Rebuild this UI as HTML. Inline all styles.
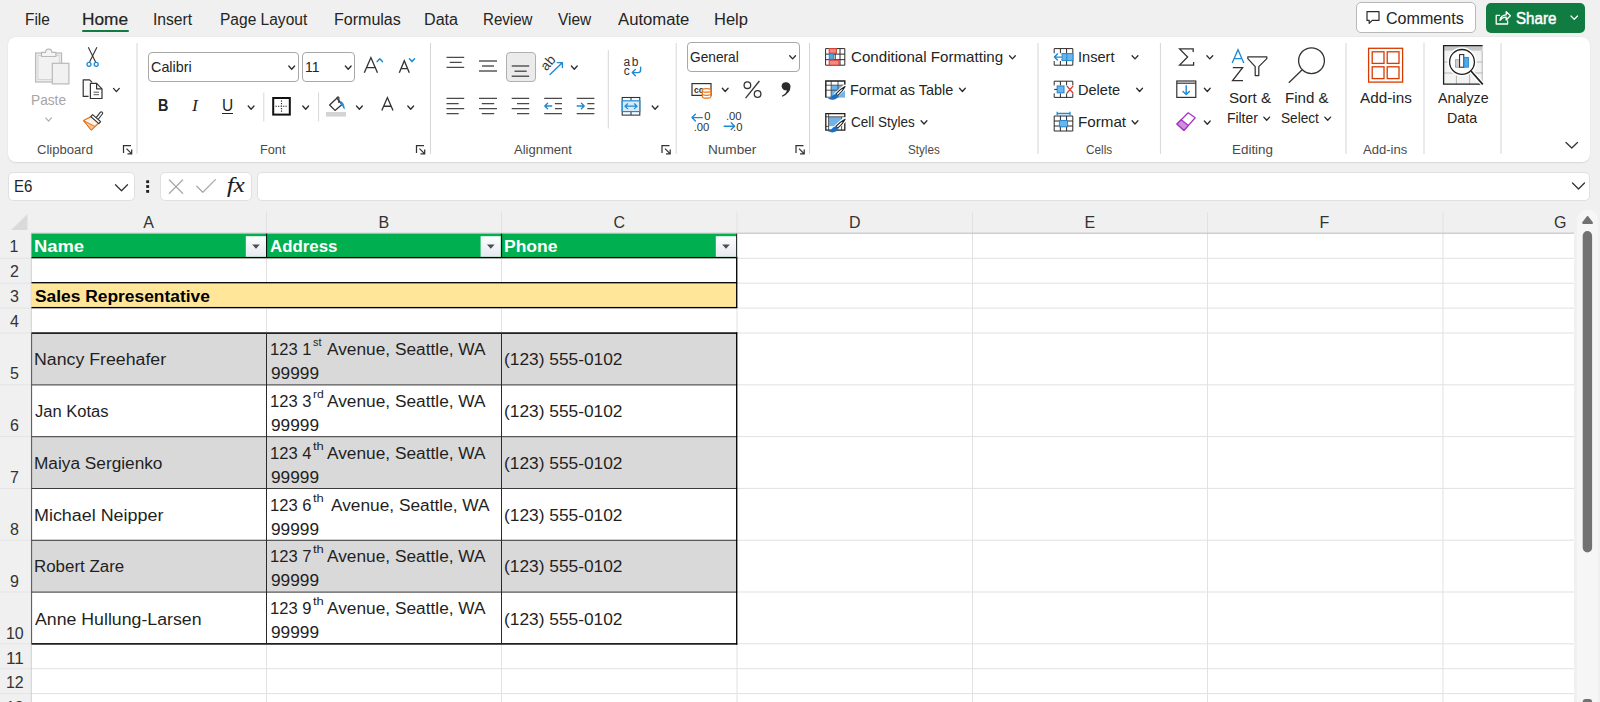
<!DOCTYPE html>
<html lang="en"><head><meta charset="utf-8"><title>Excel</title>
<style>
html,body{margin:0;padding:0}
body{width:1600px;height:702px;overflow:hidden;position:relative;background:#f0f0f0;font-family:"Liberation Sans", sans-serif;color:#242424}
body>div,body>span,body>svg{position:absolute}
.t{white-space:pre;line-height:1;display:block}
</style></head><body>
<div style="left:82px;top:30px;width:47px;height:2.4px;background:#107c41;border-radius:1px"></div>
<div style="left:1355.5px;top:2px;width:120.5px;height:30.5px;background:#fff;border:1px solid #b8b8b8;box-sizing:border-box;border-radius:5px;"></div>
<div style="left:1486px;top:2.5px;width:99px;height:30.0px;background:#107c41;border-radius:5px;"></div>
<div style="left:8px;top:37px;width:1582px;height:125px;background:#fff;border-radius:8px;box-shadow:0 0.5px 1.5px rgba(0,0,0,.10)"></div>
<div style="left:147.5px;top:52px;width:151.5px;height:30px;background:#fff;border:1px solid #a8a8a8;box-sizing:border-box;border-radius:4px;"></div>
<div style="left:302px;top:52px;width:53px;height:30px;background:#fff;border:1px solid #a8a8a8;box-sizing:border-box;border-radius:4px;"></div>
<div style="left:686.5px;top:42px;width:113.5px;height:30px;background:#fff;border:1px solid #a8a8a8;box-sizing:border-box;border-radius:4px;"></div>
<div style="left:505.5px;top:52px;width:30.5px;height:30px;background:#ebebeb;border:1px solid #b0b0b0;box-sizing:border-box;border-radius:4px;"></div>
<div style="left:221.5px;top:112.6px;width:11.5px;height:1.4px;background:#242424"></div>
<div style="left:8px;top:172px;width:126.5px;height:28.6px;background:#fff;border:1px solid #e0e0e0;box-sizing:border-box;border-radius:5px"></div>
<div style="left:160px;top:172px;width:91.6px;height:28.6px;background:#fff;border:1px solid #e0e0e0;box-sizing:border-box;border-radius:5px"></div>
<div style="left:257px;top:172px;width:1332.5px;height:28.6px;background:#fff;border:1px solid #e0e0e0;box-sizing:border-box;border-radius:5px"></div>
<div style="left:31px;top:233px;width:1543px;height:469px;background:#fff;"></div>
<svg width="1600" height="702" viewBox="0 0 1600 702" style="left:0;top:0">
<rect x="136.5" y="43" width="1" height="111" fill="#d6d6d6"/>
<rect x="430.0" y="43" width="1" height="111" fill="#d6d6d6"/>
<rect x="675.7" y="43" width="1" height="111" fill="#d6d6d6"/>
<rect x="809.0" y="43" width="1" height="111" fill="#d6d6d6"/>
<rect x="1037.5" y="43" width="1" height="111" fill="#d6d6d6"/>
<rect x="1159.9" y="43" width="1" height="111" fill="#d6d6d6"/>
<rect x="1345.5" y="43" width="1" height="111" fill="#d6d6d6"/>
<rect x="1423.5" y="43" width="1" height="111" fill="#d6d6d6"/>
<rect x="1500.5" y="43" width="1" height="111" fill="#d6d6d6"/>
<rect x="263.3" y="92.5" width="1" height="28.900000000000006" fill="#d6d6d6"/>
<rect x="318.1" y="92.5" width="1" height="28.900000000000006" fill="#d6d6d6"/>
<rect x="607.8" y="50.2" width="1" height="78.3" fill="#d6d6d6"/>
<g fill="none" stroke="#333" stroke-width="1.25"><path d="M123.5 153.1 v-7.5 h7.5"/><path d="M126.5 148.6 l5 5 M131.7 149.6 v4.2 h-4.2"/></g>
<g fill="none" stroke="#333" stroke-width="1.25"><path d="M416.5 153.1 v-7.5 h7.5"/><path d="M419.5 148.6 l5 5 M424.7 149.6 v4.2 h-4.2"/></g>
<g fill="none" stroke="#333" stroke-width="1.25"><path d="M662.0 153.1 v-7.5 h7.5"/><path d="M665.0 148.6 l5 5 M670.2 149.6 v4.2 h-4.2"/></g>
<g fill="none" stroke="#333" stroke-width="1.25"><path d="M796.0 153.1 v-7.5 h7.5"/><path d="M799.0 148.6 l5 5 M804.2 149.6 v4.2 h-4.2"/></g>
<path d="M45.7 117.9 l2.9 3.2 l2.9 -3.2" fill="none" stroke="#b0b0b0" stroke-width="1.3" stroke-linecap="round" stroke-linejoin="round"/>
<path d="M113.5 88.4 l2.9 3.2 l2.9 -3.2" fill="none" stroke="#2b2b2b" stroke-width="1.3" stroke-linecap="round" stroke-linejoin="round"/>
<path d="M288.8 66.0 l2.9 3.2 l2.9 -3.2" fill="none" stroke="#2b2b2b" stroke-width="1.3" stroke-linecap="round" stroke-linejoin="round"/>
<path d="M345.3 66.0 l2.9 3.2 l2.9 -3.2" fill="none" stroke="#2b2b2b" stroke-width="1.3" stroke-linecap="round" stroke-linejoin="round"/>
<path d="M248.2 106.0 l2.9 3.2 l2.9 -3.2" fill="none" stroke="#2b2b2b" stroke-width="1.3" stroke-linecap="round" stroke-linejoin="round"/>
<path d="M302.8 106.0 l2.9 3.2 l2.9 -3.2" fill="none" stroke="#2b2b2b" stroke-width="1.3" stroke-linecap="round" stroke-linejoin="round"/>
<path d="M356.5 106.0 l2.9 3.2 l2.9 -3.2" fill="none" stroke="#2b2b2b" stroke-width="1.3" stroke-linecap="round" stroke-linejoin="round"/>
<path d="M407.8 106.0 l2.9 3.2 l2.9 -3.2" fill="none" stroke="#2b2b2b" stroke-width="1.3" stroke-linecap="round" stroke-linejoin="round"/>
<path d="M571.4 66.0 l2.9 3.2 l2.9 -3.2" fill="none" stroke="#2b2b2b" stroke-width="1.3" stroke-linecap="round" stroke-linejoin="round"/>
<path d="M652.2 106.0 l2.9 3.2 l2.9 -3.2" fill="none" stroke="#2b2b2b" stroke-width="1.3" stroke-linecap="round" stroke-linejoin="round"/>
<path d="M789.7 55.699999999999996 l2.9 3.2 l2.9 -3.2" fill="none" stroke="#2b2b2b" stroke-width="1.3" stroke-linecap="round" stroke-linejoin="round"/>
<path d="M722.3 88.30000000000001 l2.9 3.2 l2.9 -3.2" fill="none" stroke="#2b2b2b" stroke-width="1.3" stroke-linecap="round" stroke-linejoin="round"/>
<path d="M1009.5 55.699999999999996 l2.9 3.2 l2.9 -3.2" fill="none" stroke="#2b2b2b" stroke-width="1.3" stroke-linecap="round" stroke-linejoin="round"/>
<path d="M959.5 88.30000000000001 l2.9 3.2 l2.9 -3.2" fill="none" stroke="#2b2b2b" stroke-width="1.3" stroke-linecap="round" stroke-linejoin="round"/>
<path d="M921.1 120.80000000000001 l2.9 3.2 l2.9 -3.2" fill="none" stroke="#2b2b2b" stroke-width="1.3" stroke-linecap="round" stroke-linejoin="round"/>
<path d="M1132.1 55.699999999999996 l2.9 3.2 l2.9 -3.2" fill="none" stroke="#2b2b2b" stroke-width="1.3" stroke-linecap="round" stroke-linejoin="round"/>
<path d="M1136.7 88.30000000000001 l2.9 3.2 l2.9 -3.2" fill="none" stroke="#2b2b2b" stroke-width="1.3" stroke-linecap="round" stroke-linejoin="round"/>
<path d="M1132.1 120.80000000000001 l2.9 3.2 l2.9 -3.2" fill="none" stroke="#2b2b2b" stroke-width="1.3" stroke-linecap="round" stroke-linejoin="round"/>
<path d="M1206.9 55.699999999999996 l2.9 3.2 l2.9 -3.2" fill="none" stroke="#2b2b2b" stroke-width="1.3" stroke-linecap="round" stroke-linejoin="round"/>
<path d="M1204.4 88.30000000000001 l2.9 3.2 l2.9 -3.2" fill="none" stroke="#2b2b2b" stroke-width="1.3" stroke-linecap="round" stroke-linejoin="round"/>
<path d="M1204.4 121.0 l2.9 3.2 l2.9 -3.2" fill="none" stroke="#2b2b2b" stroke-width="1.3" stroke-linecap="round" stroke-linejoin="round"/>
<path d="M1263.8 117.10000000000001 l2.9 3.2 l2.9 -3.2" fill="none" stroke="#2b2b2b" stroke-width="1.3" stroke-linecap="round" stroke-linejoin="round"/>
<path d="M1324.8 117.10000000000001 l2.9 3.2 l2.9 -3.2" fill="none" stroke="#2b2b2b" stroke-width="1.3" stroke-linecap="round" stroke-linejoin="round"/>
<path d="M1571 16 l3.25 3.4 l3.25 -3.4" fill="none" stroke="#fff" stroke-width="1.25" stroke-linecap="round" stroke-linejoin="round"/>
<path d="M1566 142.5 l5.75 5.5 l5.75 -5.5" fill="none" stroke="#333" stroke-width="1.3" stroke-linecap="round" stroke-linejoin="round"/>
<path d="M1572.5 183 l6.0 6 l6.0 -6" fill="none" stroke="#333" stroke-width="1.3" stroke-linecap="round" stroke-linejoin="round"/>
<path d="M115.5 184.8 l6.0 6 l6.0 -6" fill="none" stroke="#333" stroke-width="1.3" stroke-linecap="round" stroke-linejoin="round"/>
<g fill="#ececec" stroke="#b9b9b9" stroke-width="1.2"><rect x="35.6" y="53" width="26" height="29" /><rect x="38" y="55.4" width="21.2" height="24.2" fill="#f2f2f2" stroke="#cfcfcf" stroke-width="0.8"/><path d="M41.5 56.5 v-4.2 h4 a3.2 3.2 0 0 1 6.4 0 h4 v4.2 z" fill="#f4f4f4"/><rect x="52.3" y="63.3" width="16.6" height="20.6" fill="#f1f1f1"/></g>
<g fill="none" stroke-width="1.1"><path d="M88.3 47.2 L95.6 62 M96.9 47.2 L89.6 62" stroke="#333"/><circle cx="89" cy="64.3" r="2" stroke="#1e8ad6" stroke-width="1.3"/><circle cx="96.2" cy="64.3" r="2" stroke="#1e8ad6" stroke-width="1.3"/></g>
<g fill="none" stroke="#333" stroke-width="1.2" stroke-linejoin="round"><path d="M91.6 82.6 V81.8 L89.6 79.8 H83.2 V96.4 H88.6" fill="#fafafa"/><path d="M90.4 83.4 H96.6 L102 88.8 V98.5 H90.4 Z" fill="#fff"/><path d="M96.6 83.6 V88.8 H101.8"/><path d="M93.6 92.2 H99 M93.6 94.7 H99" stroke-width="1" stroke="#555"/></g>
<g stroke-linejoin="round" stroke-linecap="round"><path d="M91.6 116.4 L83.5 120.5 L91.4 129.8 L98.8 123 Z" fill="#fdf3ea" stroke="#e8731a" stroke-width="1.3"/><path d="M84 120.8 L95 126.5 L91.4 129.8 Z" fill="#f9c48f" stroke="#e8731a" stroke-width="1"/><path d="M97.4 118.2 L101.3 113.2" stroke="#333" stroke-width="3.8" fill="none"/><path d="M97.4 118.2 L101.3 113.2" stroke="#fff" stroke-width="1.5" fill="none"/><path d="M92.6 114.6 L100.6 121.6 L98.8 123.6 L90.8 116.6 Z" fill="#fff" stroke="#333" stroke-width="1.15"/></g>
<g fill="none" stroke="#333" stroke-width="1.35"><path d="M364.3 72.7 L370.9 57.6 L377.5 72.7 M366.4 67.6 H375.4"/><path d="M399.3 72.7 L404.3 60.8 L409.3 72.7 M400.9 68.6 H407.7"/></g>
<g fill="none" stroke="#1e8ad6" stroke-width="1.5" stroke-linecap="round" stroke-linejoin="round"><path d="M377.2 61.6 L379.8 58.7 L382.4 61.6"/><path d="M409.4 58.7 L412 61.6 L414.6 58.7"/></g>
<rect x="273.2" y="98" width="16.6" height="16.6" fill="#fff" stroke="#111" stroke-width="2"/><path d="M281.5 100.5 V112.5 M275.5 106.3 H287.5" stroke="#2b2b2b" stroke-width="1.1" stroke-dasharray="1.3 1.2" fill="none"/>
<g fill="none" stroke="#333" stroke-width="1.25" stroke-linejoin="round"><path d="M329.6 105 L336.8 98.2 L342 104.6 L335 110.4 Z" fill="#fff"/><path d="M336.8 98.2 q0.6 -2 2.1 -0.8 V103"/></g><path d="M340.3 101.3 q3.6 1 4 7.5 q-1.6 -3.6 -3.4 -4.6 z" fill="#1e8ad6" stroke="#1e8ad6" stroke-width="0.8"/><rect x="326" y="112" width="20" height="4.6" fill="#d4d4d4"/>
<path d="M381.8 110.4 L387.4 97.6 L393 110.4 M383.7 106.2 H391.1" fill="none" stroke="#333" stroke-width="1.35"/>
<path d="M446.5 57.3 H464.2 M449.7 62.4 H461.7 M446.5 67.3 H464.2" stroke="#4a4a4a" stroke-width="1.25" fill="none"/>
<path d="M479 60.9 H497 M482 66 H494 M479 71.1 H497" stroke="#5a5a5a" stroke-width="1.5" fill="none"/>
<path d="M511.7 66 H529.2 M514.5 71.2 H526.7 M511.7 76.2 H529.2" stroke="#5a5a5a" stroke-width="1.5" fill="none"/>
<path d="M446.5 98.3 H464.2 M446.5 103.5 H458.7 M446.5 108.6 H464.2 M446.5 113.7 H458.7" stroke="#4a4a4a" stroke-width="1.25" fill="none"/>
<path d="M479 98.3 H497 M481.8 103.5 H494.2 M479 108.6 H497 M481.8 113.7 H494.2" stroke="#4a4a4a" stroke-width="1.25" fill="none"/>
<path d="M511.7 98.3 H529.2 M517 103.5 H529.2 M511.7 108.6 H529.2 M517 113.7 H529.2" stroke="#4a4a4a" stroke-width="1.25" fill="none"/>
<path d="M544.2 98.3 H562 M554.9 103.5 H562 M554.9 108.6 H562 M544.2 113.7 H562" stroke="#4a4a4a" stroke-width="1.25" fill="none"/>
<path d="M576.7 98.3 H594.4 M587.3 103.5 H594.4 M587.3 108.6 H594.4 M576.7 113.7 H594.4" stroke="#4a4a4a" stroke-width="1.25" fill="none"/>
<g fill="none" stroke="#1e8ad6" stroke-width="1.4" stroke-linecap="round" stroke-linejoin="round"><path d="M551.7 106 H544.8 M547.6 103.2 L544.8 106 L547.6 108.8"/><path d="M577.2 106 H584.2 M581.4 103.2 L584.2 106 L581.4 108.8"/></g>
<text x="0" y="0" transform="translate(546.6 71.4) rotate(-50)" font-family='"Liberation Sans", sans-serif' font-size="13.5" fill="#333">ab</text>
<g fill="none" stroke="#1e8ad6" stroke-width="1.4" stroke-linecap="round" stroke-linejoin="round"><path d="M550 74.6 L562.2 62.8 M557.4 62.6 H562.4 V67.6"/></g>
<text x="623.6" y="66.4" font-family='"Liberation Sans", sans-serif' font-size="12" fill="#333" letter-spacing="1.5">ab</text><text x="623.8" y="75.3" font-family='"Liberation Sans", sans-serif' font-size="12" fill="#333">c</text>
<path d="M640.6 67.2 V70 q0 2.6 -2.6 2.6 H632.2 M635.3 69.6 L632.2 72.6 L635.3 75.8" fill="none" stroke="#1e8ad6" stroke-width="1.4" stroke-linecap="round" stroke-linejoin="round"/>
<g fill="none" stroke="#333" stroke-width="1.1"><rect x="622.2" y="97.5" width="17.6" height="17.6"/><path d="M631 97.5 V100.6 M631 111.8 V115.1"/></g><rect x="622.2" y="100.8" width="17.6" height="10.8" fill="#d6eaf8" stroke="#1e8ad6" stroke-width="1.2"/><path d="M625 106.2 H637 M627.6 103.8 L625 106.2 L627.6 108.6 M634.4 103.8 L637 106.2 L634.4 108.6" fill="none" stroke="#1e8ad6" stroke-width="1.2" stroke-linecap="round" stroke-linejoin="round"/>
<g fill="none" stroke="#333" stroke-width="1.2"><rect x="692" y="83.6" width="19" height="11.8"/></g><text x="694" y="93" font-family='"Liberation Sans", sans-serif' font-size="8.5" font-weight="700" fill="#333">cc</text><g fill="#fff" stroke="#e8731a" stroke-width="1.2"><path d="M702.3 90.4 v6 a4.3 1.8 0 0 0 8.6 0 v-6"/><ellipse cx="706.6" cy="90.4" rx="4.3" ry="1.8"/><path d="M702.3 93.6 a4.3 1.8 0 0 0 8.6 0" fill="none"/></g>
<g fill="none" stroke="#333" stroke-width="1.3"><circle cx="747.4" cy="85.2" r="3.3"/><circle cx="757.6" cy="94" r="3.3"/><path d="M759.4 81 L745.6 98.2"/></g>
<path d="M786 82.2 a4.3 4.3 0 0 1 4.5 4.6 q0 6 -8 10 l-0.6 -1 q4.6 -2.6 4.9 -5.6 a4.2 4.2 0 0 1 -5.2 -3.9 a4.3 4.3 0 0 1 4.4 -4.1 z" fill="#2b2b2b"/>
<text x="704.2" y="120" font-family='"Liberation Sans", sans-serif' font-size="11.3" fill="#333">0</text><text x="693.8" y="130.6" font-family='"Liberation Sans", sans-serif' font-size="11.3" fill="#333" letter-spacing="-0.1">.00</text><text x="726" y="120" font-family='"Liberation Sans", sans-serif' font-size="11.3" fill="#333" letter-spacing="-0.1">.00</text><text x="733" y="130.6" font-family='"Liberation Sans", sans-serif' font-size="11.3" fill="#333">.0</text>
<g fill="none" stroke="#1e8ad6" stroke-width="1.4" stroke-linecap="round" stroke-linejoin="round"><path d="M702.4 117.6 H692 M695.4 114.2 L692 117.6 L695.4 121"/><path d="M724.2 126.2 H734.6 M731.2 122.8 L734.6 126.2 L731.2 129.6"/></g>
<path d="M825.6 48.6 H844.8 V65.2 H825.6 Z M830.40 48.6 V65.2 M835.20 48.6 V65.2 M840.00 48.6 V65.2 M825.6 54.13 H844.8 M825.6 59.67 H844.8" fill="#fff" stroke="#2b2b2b" stroke-width="1.0"/>
<rect x="829.2" y="48.6" width="7.2" height="4.6" fill="#f08a84" stroke="#d8423a" stroke-width="1.1"/><rect x="829.2" y="54" width="4.2" height="5.2" fill="#5aa6e0" stroke="#1e8ad6" stroke-width="1"/><rect x="829.2" y="60.2" width="9.8" height="5" fill="#f08a84" stroke="#d8423a" stroke-width="1.1"/>
<rect x="825.6" y="81" width="19.2" height="16.4" fill="#fff"/><rect x="831.4" y="85.4" width="13.6" height="12.2" fill="#6fb3e8"/><path d="M831.2 81 V97.4 M838 81 V97.4 M825.6 85.2 H844.8 M825.6 90.2 H844.8 M825.6 97.2 H831" stroke="#444" stroke-width="0.9" fill="none"/><path d="M825.8 97.4 V81 H844.8 V85" stroke="#1f1f1f" stroke-width="1.4" fill="none"/>
<path d="M844.8 87.1 L835.3 95.5" stroke="#fff" stroke-width="5" fill="none" stroke-linecap="round"/><path d="M845.1 86.6 Q840.5 89.0 835.9 93.8 L837.7 95.6 Q842.7 91.4 845.1 86.6 Z" fill="#fff" stroke="#222" stroke-width="1.1" stroke-linejoin="round"/><path d="M836.3 94.2 q-3.2 -0.2 -4.2 2 q-0.8 1.8 -3.8 2.2 q3.4 1.9 6.9 0.6 q2.6 -1.2 2.9 -3.1 z" fill="#1b6ec2" stroke="#1b6ec2" stroke-width="0.5"/>
<rect x="825.8" y="113.6" width="19" height="16.6" fill="#fff"/><rect x="829" y="117" width="12.4" height="9.2" fill="#6fb3e8"/><path d="M828.6 113.6 V130.2 M841.6 117 V130.2 M825.8 116.8 H844.8 M825.8 126.4 H829" stroke="#444" stroke-width="0.9" fill="none"/><path d="M825.8 113.6 H844.8 V130.2 H825.8 Z" stroke="#1f1f1f" stroke-width="1.3" fill="none"/>
<path d="M844.8 119.7 L835.3 128.1" stroke="#fff" stroke-width="5" fill="none" stroke-linecap="round"/><path d="M845.1 119.2 Q840.5 121.6 835.9 126.4 L837.7 128.2 Q842.7 124.0 845.1 119.2 Z" fill="#fff" stroke="#222" stroke-width="1.1" stroke-linejoin="round"/><path d="M836.3 126.8 q-3.2 -0.2 -4.2 2 q-0.8 1.8 -3.8 2.2 q3.4 1.9 6.9 0.6 q2.6 -1.2 2.9 -3.1 z" fill="#1b6ec2" stroke="#1b6ec2" stroke-width="0.5"/>
<path d="M1054.2 48.6 H1072.8 V65.2 H1054.2 Z M1060.40 48.6 V65.2 M1066.60 48.6 V65.2 M1054.2 54.13 H1072.8 M1054.2 59.67 H1072.8" fill="#fff" stroke="#2b2b2b" stroke-width="1.0"/>
<rect x="1062" y="53.6" width="11" height="7" fill="#6fb3e8" stroke="#1e8ad6" stroke-width="1"/><path d="M1066.8 53.6 V60.6" stroke="#1e8ad6" stroke-width="1"/><rect x="1053" y="53.2" width="8.4" height="7.8" fill="#fff"/><path d="M1061.6 57.1 H1054.4 M1057.4 54.1 L1054.4 57.1 L1057.4 60.1" fill="none" stroke="#1e8ad6" stroke-width="1.4" stroke-linecap="round" stroke-linejoin="round"/>
<path d="M1054.2 81.2 H1072.8 V97.4 H1054.2 Z M1060.40 81.2 V97.4 M1066.60 81.2 V97.4 M1054.2 86.60 H1072.8 M1054.2 92.00 H1072.8" fill="#fff" stroke="#2b2b2b" stroke-width="1.0"/>
<rect x="1053" y="85.4" width="21" height="8" fill="#fff"/><rect x="1057.2" y="86" width="6.8" height="6.8" fill="#6fb3e8" stroke="#1e8ad6" stroke-width="1.1"/><path d="M1054.2 89.4 H1057 " stroke="#2b2b2b" stroke-width="1"/><path d="M1067.2 86.4 L1072.8 92.8 M1072.8 86.4 L1067.2 92.8" stroke="#d8423a" stroke-width="1.4" fill="none" stroke-linecap="round"/>
<path d="M1054.2 116 H1072.8 V131 H1054.2 Z M1060.40 116 V131 M1066.60 116 V131 M1054.2 121.00 H1072.8 M1054.2 126.00 H1072.8" fill="#fff" stroke="#2b2b2b" stroke-width="1.0"/>
<rect x="1059.4" y="120.6" width="8.2" height="6.2" fill="#6fb3e8" stroke="#1e8ad6" stroke-width="1"/><path d="M1057.2 113.5 H1070 M1057.2 111.8 V115.2 M1070 111.8 V115.2" stroke="#1e8ad6" stroke-width="1.3" fill="none"/>
<path d="M1193.2 52 V48.9 H1179.6 L1187.6 57 L1179.6 65.1 H1193.6 V62" fill="none" stroke="#333" stroke-width="1.3" stroke-linejoin="miter"/>
<g fill="none" stroke="#333" stroke-width="1.2"><rect x="1176.8" y="81" width="19" height="16.4" fill="#fff"/><path d="M1176.8 83.2 H1195.8"/></g><path d="M1186.2 85.8 V94.4 M1183 91.4 L1186.2 94.6 L1189.4 91.4" fill="none" stroke="#1e8ad6" stroke-width="1.4" stroke-linecap="round" stroke-linejoin="round"/>
<g stroke="#a435c0" stroke-width="1.3" stroke-linejoin="round"><path d="M1177 124 L1188.2 112.8 L1195.2 117.8 L1184 130.4 Z" fill="#fff"/><path d="M1177 124 L1181.2 119.8 L1188.4 125.4 L1184 130.4 Z" fill="#cf8fdc"/></g>
<path d="M1232.2 63 L1238 49.8 L1243.8 63 M1234.2 58.6 H1241.8" fill="none" stroke="#1e8ad6" stroke-width="1.35"/><path d="M1232.8 67.6 H1242.6 L1232.6 80.6 H1243" fill="none" stroke="#333" stroke-width="1.35"/><path d="M1247.8 56.8 H1266.8 V58.6 L1258.8 66.6 V75.6 H1255.2 V66.6 L1247.8 58.6 Z" fill="#fff" stroke="#333" stroke-width="1.25" stroke-linejoin="round"/>
<g fill="none" stroke="#333" stroke-width="1.3"><circle cx="1311.5" cy="60.7" r="12.9"/><path d="M1302.2 69.8 L1288.8 82.8"/></g>
<g fill="none" stroke="#d83b01" stroke-width="1.3"><rect x="1368.6" y="48.3" width="34" height="33.8"/><rect x="1372.2" y="51.8" width="11.8" height="11.6"/><rect x="1387.2" y="51.8" width="11.8" height="11.6"/><rect x="1372.2" y="66.8" width="11.8" height="11.8"/><rect x="1387.2" y="66.8" width="11.8" height="11.8"/></g>
<rect x="1443.6" y="45.6" width="39" height="38.6" fill="#f3f3f3"/><rect x="1443.6" y="45.6" width="39" height="5" fill="#c6c6c6"/><path d="M1443.6 62 H1482.6 M1443.6 73 H1482.6 M1456.4 51 V84 M1469.6 51 V84 M1482.2 51 V84" stroke="#b5b5b5" stroke-width="1" fill="none"/><path d="M1482.6 45.6 H1443.6 V84.2 H1482.6" stroke="#1f1f1f" stroke-width="1.3" fill="none"/><circle cx="1462" cy="61.9" r="14.6" fill="#fff"/><path d="M1471 71 L1482.8 84.4" stroke="#fff" stroke-width="4" fill="none"/><path d="M1471 71 L1482.8 84.4" stroke="#1f1f1f" stroke-width="1.6" fill="none"/><circle cx="1462" cy="61.9" r="12.4" fill="#fff" stroke="#1f1f1f" stroke-width="1.3"/><rect x="1455.4" y="59.8" width="4" height="7.4" fill="#d0d0d0" stroke="#9a9a9a" stroke-width="0.8"/><rect x="1459.6" y="54.6" width="4.2" height="12.6" fill="#fff" stroke="#1f1f1f" stroke-width="1"/><rect x="1464" y="57.4" width="4.4" height="9.8" fill="#5aa6e0" stroke="#1e8ad6" stroke-width="0.9"/>
<path d="M1367 11.6 H1379 V20.4 H1372.2 L1369.2 23.4 V20.4 H1367 Z" fill="none" stroke="#2b2b2b" stroke-width="1.2" stroke-linejoin="round"/>
<g fill="none" stroke="#fff" stroke-width="1.3" stroke-linejoin="round" stroke-linecap="round"><path d="M1499.6 15.4 H1496.2 V24 H1507.6 V21"/><path d="M1500 20.4 q0.6 -5.4 6.2 -5.6 V11.6 L1510.4 15.8 L1506.2 20 V17.2 q-4 -0.2 -6.2 3.2 z"/></g>
<g fill="#1f1f1f"><rect x="146.2" y="180.3" width="2.9" height="2.8"/><rect x="146.2" y="185.1" width="2.9" height="2.8"/><rect x="146.2" y="190" width="2.9" height="2.8"/></g>
<g fill="none" stroke="#a9a9a9" stroke-width="1.3" stroke-linecap="round" stroke-linejoin="round"><path d="M169.4 180 L182.6 193.2 M182.6 180 L169.4 193.2"/><path d="M196.8 186.2 L202.8 192.2 L215.4 179.6"/></g>
<rect x="266.0" y="233" width="1" height="469" fill="#e2e2e2"/>
<rect x="266.0" y="212" width="1" height="21" fill="#e2e2e2"/>
<rect x="501.0" y="233" width="1" height="469" fill="#e2e2e2"/>
<rect x="501.0" y="212" width="1" height="21" fill="#e2e2e2"/>
<rect x="736.5" y="233" width="1" height="469" fill="#e2e2e2"/>
<rect x="736.5" y="212" width="1" height="21" fill="#e2e2e2"/>
<rect x="972.0" y="233" width="1" height="469" fill="#e2e2e2"/>
<rect x="972.0" y="212" width="1" height="21" fill="#e2e2e2"/>
<rect x="1207.0" y="233" width="1" height="469" fill="#e2e2e2"/>
<rect x="1207.0" y="212" width="1" height="21" fill="#e2e2e2"/>
<rect x="1442.5" y="233" width="1" height="469" fill="#e2e2e2"/>
<rect x="1442.5" y="212" width="1" height="21" fill="#e2e2e2"/>
<rect x="31" y="257.8" width="1543" height="1" fill="#e2e2e2"/>
<rect x="0" y="257.8" width="31" height="1" fill="#e4e4e4"/>
<rect x="31" y="282.7" width="1543" height="1" fill="#e2e2e2"/>
<rect x="0" y="282.7" width="31" height="1" fill="#e4e4e4"/>
<rect x="31" y="307.6" width="1543" height="1" fill="#e2e2e2"/>
<rect x="0" y="307.6" width="31" height="1" fill="#e4e4e4"/>
<rect x="31" y="332.5" width="1543" height="1" fill="#e2e2e2"/>
<rect x="0" y="332.5" width="31" height="1" fill="#e4e4e4"/>
<rect x="31" y="384.3" width="1543" height="1" fill="#e2e2e2"/>
<rect x="0" y="384.3" width="31" height="1" fill="#e4e4e4"/>
<rect x="31" y="436.1" width="1543" height="1" fill="#e2e2e2"/>
<rect x="0" y="436.1" width="31" height="1" fill="#e4e4e4"/>
<rect x="31" y="487.9" width="1543" height="1" fill="#e2e2e2"/>
<rect x="0" y="487.9" width="31" height="1" fill="#e4e4e4"/>
<rect x="31" y="539.7" width="1543" height="1" fill="#e2e2e2"/>
<rect x="0" y="539.7" width="31" height="1" fill="#e4e4e4"/>
<rect x="31" y="591.5" width="1543" height="1" fill="#e2e2e2"/>
<rect x="0" y="591.5" width="31" height="1" fill="#e4e4e4"/>
<rect x="31" y="643.3" width="1543" height="1" fill="#e2e2e2"/>
<rect x="0" y="643.3" width="31" height="1" fill="#e4e4e4"/>
<rect x="31" y="668.2" width="1543" height="1" fill="#e2e2e2"/>
<rect x="0" y="668.2" width="31" height="1" fill="#e4e4e4"/>
<rect x="31" y="693.1" width="1543" height="1" fill="#e2e2e2"/>
<rect x="0" y="693.1" width="31" height="1" fill="#e4e4e4"/>
<rect x="31" y="718.0" width="1543" height="1" fill="#e2e2e2"/>
<rect x="0" y="718.0" width="31" height="1" fill="#e4e4e4"/>
<rect x="31" y="232.7" width="1543" height="1" fill="#bdbdbd"/>
<rect x="30.8" y="233" width="1" height="469" fill="#cfcfcf"/>
<path d="M27.5 214 V230 H11 Z" fill="#dadada"/>
<rect x="31.5" y="233.7" width="705.0" height="23.600000000000023" fill="#00b050"/>
<rect x="31.5" y="283.0" width="705.0" height="24.30000000000001" fill="#ffe699"/>
<rect x="31.5" y="333.0" width="705.0" height="51.80000000000001" fill="#d9d9d9"/>
<rect x="31.5" y="436.6" width="705.0" height="51.799999999999955" fill="#d9d9d9"/>
<rect x="31.5" y="540.2" width="705.0" height="51.799999999999955" fill="#d9d9d9"/>
<rect x="31.5" y="256.95000000000005" width="705.7" height="1.3" fill="#000"/>
<rect x="31.5" y="282.05" width="705.7" height="1.3" fill="#000"/>
<rect x="31.5" y="306.95000000000005" width="705.7" height="1.3" fill="#000"/>
<rect x="31.5" y="332.35" width="705.7" height="1.5" fill="#000"/>
<rect x="31.5" y="643.15" width="705.7" height="1.5" fill="#000"/>
<rect x="31.5" y="384.40000000000003" width="705.7" height="1.0" fill="#3a3a3a"/>
<rect x="31.5" y="436.20000000000005" width="705.7" height="1.0" fill="#3a3a3a"/>
<rect x="31.5" y="488.0" width="705.7" height="1.0" fill="#3a3a3a"/>
<rect x="31.5" y="539.8000000000001" width="705.7" height="1.0" fill="#3a3a3a"/>
<rect x="31.5" y="591.6" width="705.7" height="1.0" fill="#3a3a3a"/>
<rect x="736.0500000000001" y="257" width="1.3" height="51" fill="#000"/>
<rect x="736.0500000000001" y="332.4" width="1.3" height="312.20000000000005" fill="#000"/>
<rect x="265.9" y="233.7" width="1.2" height="24.30000000000001" fill="#111"/>
<rect x="500.9" y="233.7" width="1.2" height="24.30000000000001" fill="#111"/>
<rect x="736.1" y="233.7" width="1.0" height="24.30000000000001" fill="#222"/>
<rect x="266.0" y="333" width="1.0" height="311" fill="#2a2a2a"/>
<rect x="501.0" y="333" width="1.0" height="311" fill="#2a2a2a"/>
<rect x="31.1" y="333" width="1.0" height="311" fill="#555"/>
<rect x="245.8" y="236.2" width="20.2" height="20.6" fill="url(#fb)"/>
<path d="M252.20000000000002 244.6 h7.6 l-3.8 4.1 z" fill="#4d4d4d"/>
<rect x="480.6" y="236.2" width="20.2" height="20.6" fill="url(#fb)"/>
<path d="M487.0 244.6 h7.6 l-3.8 4.1 z" fill="#4d4d4d"/>
<rect x="715.8" y="236.2" width="20.2" height="20.6" fill="url(#fb)"/>
<path d="M722.1999999999999 244.6 h7.6 l-3.8 4.1 z" fill="#4d4d4d"/>
<defs><linearGradient id="fb" x1="0" y1="0" x2="0" y2="1"><stop offset="0" stop-color="#fdfdfd"/><stop offset="1" stop-color="#e6eaf0"/></linearGradient></defs>
<rect x="1576.8" y="209.4" width="21.2" height="520" rx="10.5" fill="#f6f6f6"/>
<path d="M1583.2 222.8 L1587.55 217.2 L1591.9 222.8 Z" fill="#727272" stroke="#727272" stroke-width="2.2" stroke-linejoin="round"/>
<rect x="1582.7" y="231" width="9.4" height="321.5" rx="4.7" fill="#727272"/>
<rect x="1582.7" y="699" width="9.4" height="12" rx="3" fill="#727272"/>
</svg>
<span class="t" style='left:25.04px;top:12px;font-size:16px;transform:scaleX(0.9645);transform-origin:0 0;'>File</span>
<span class="t" style='left:152.62px;top:12px;font-size:16px;transform:scaleX(0.9780);transform-origin:0 0;'>Insert</span>
<span class="t" style='left:219.63px;top:12px;font-size:16px;transform:scaleX(0.9708);transform-origin:0 0;'>Page Layout</span>
<span class="t" style='left:333.60px;top:12px;font-size:16px;transform:scaleX(1.0018);transform-origin:0 0;'>Formulas</span>
<span class="t" style='left:424.49px;top:12px;font-size:16px;transform:scaleX(1.0061);transform-origin:0 0;'>Data</span>
<span class="t" style='left:482.56px;top:12px;font-size:16px;transform:scaleX(0.9421);transform-origin:0 0;'>Review</span>
<span class="t" style='left:558.00px;top:12px;font-size:16px;transform:scaleX(0.9645);transform-origin:0 0;'>View</span>
<span class="t" style='left:617.50px;top:12px;font-size:16px;transform:scaleX(1.0425);transform-origin:0 0;'>Automate</span>
<span class="t" style='left:713.97px;top:12px;font-size:16px;transform:scaleX(1.0310);transform-origin:0 0;'>Help</span>
<span class="t" style='left:81.82px;top:12px;font-size:16px;-webkit-text-stroke:0.2px #242424;transform:scaleX(1.0794);transform-origin:0 0;'>Home</span>
<span class="t" style='left:1386.25px;top:11px;font-size:16px;transform:scaleX(1.0052);transform-origin:0 0;'>Comments</span>
<span class="t" style='left:1516.00px;top:11px;font-size:16px;color:#fff;-webkit-text-stroke:0.5px #fff;transform:scaleX(0.9463);transform-origin:0 0;'>Share</span>
<span class="t" style='left:31.06px;top:93px;font-size:14.5px;color:#a6a6a6;transform:scaleX(0.9441);transform-origin:0 0;'>Paste</span>
<span class="t" style='left:37.00px;top:144px;font-size:12.5px;color:#4a4a4a;transform:scaleX(1.0457);transform-origin:0 0;'>Clipboard</span>
<span class="t" style='left:259.98px;top:144px;font-size:12.5px;color:#4a4a4a;transform:scaleX(1.0188);transform-origin:0 0;'>Font</span>
<span class="t" style='left:514.00px;top:144px;font-size:12.5px;color:#4a4a4a;transform:scaleX(1.0426);transform-origin:0 0;'>Alignment</span>
<span class="t" style='left:707.91px;top:144px;font-size:12.5px;color:#4a4a4a;transform:scaleX(1.0856);transform-origin:0 0;'>Number</span>
<span class="t" style='left:907.50px;top:144px;font-size:12.5px;color:#4a4a4a;transform:scaleX(0.9322);transform-origin:0 0;'>Styles</span>
<span class="t" style='left:1086.00px;top:144px;font-size:12.5px;color:#4a4a4a;transform:scaleX(0.9443);transform-origin:0 0;'>Cells</span>
<span class="t" style='left:1231.93px;top:144px;font-size:12.5px;color:#4a4a4a;transform:scaleX(1.0733);transform-origin:0 0;'>Editing</span>
<span class="t" style='left:1363.00px;top:144px;font-size:12.5px;color:#4a4a4a;transform:scaleX(1.0443);transform-origin:0 0;'>Add-ins</span>
<span class="t" style='left:150.50px;top:60px;font-size:14.5px;transform:scaleX(0.9909);transform-origin:0 0;'>Calibri</span>
<span class="t" style='left:305.03px;top:60px;font-size:14.5px;transform:scaleX(0.9651);transform-origin:0 0;'>11</span>
<span class="t" style='left:689.50px;top:50px;font-size:14.5px;transform:scaleX(0.9442);transform-origin:0 0;'>General</span>
<span class="t" style='left:157.60px;top:98px;font-size:16px;font-weight:700;transform:scaleX(0.9000);transform-origin:0 0;'>B</span>
<span class="t" style='left:192.24px;top:97px;font-size:17px;font-style:italic;font-family:"Liberation Serif", serif;transform:scaleX(1.0375);transform-origin:0 0;'>I</span>
<span class="t" style='left:221.53px;top:98px;font-size:16px;transform:scaleX(0.9700);transform-origin:0 0;'>U</span>
<span class="t" style='left:850.50px;top:50px;font-size:14.5px;transform:scaleX(1.0424);transform-origin:0 0;'>Conditional Formatting</span>
<span class="t" style='left:849.50px;top:83px;font-size:14.5px;transform:scaleX(0.9962);transform-origin:0 0;'>Format as Table</span>
<span class="t" style='left:850.50px;top:115px;font-size:14.5px;transform:scaleX(0.9305);transform-origin:0 0;'>Cell Styles</span>
<span class="t" style='left:1077.99px;top:50px;font-size:14.5px;transform:scaleX(1.0075);transform-origin:0 0;'>Insert</span>
<span class="t" style='left:1078.00px;top:83px;font-size:14.5px;transform:scaleX(1.0037);transform-origin:0 0;'>Delete</span>
<span class="t" style='left:1077.95px;top:115px;font-size:14.5px;transform:scaleX(1.0469);transform-origin:0 0;'>Format</span>
<span class="t" style='left:1228.60px;top:91px;font-size:14.5px;transform:scaleX(1.0438);transform-origin:0 0;'>Sort &amp;</span>
<span class="t" style='left:1226.54px;top:111px;font-size:14.5px;transform:scaleX(0.9556);transform-origin:0 0;'>Filter</span>
<span class="t" style='left:1284.86px;top:91px;font-size:14.5px;transform:scaleX(1.0404);transform-origin:0 0;'>Find &amp;</span>
<span class="t" style='left:1281.10px;top:111px;font-size:14.5px;transform:scaleX(0.9386);transform-origin:0 0;'>Select</span>
<span class="t" style='left:1359.50px;top:91px;font-size:14.5px;transform:scaleX(1.0529);transform-origin:0 0;'>Add-ins</span>
<span class="t" style='left:1437.50px;top:91px;font-size:14.5px;transform:scaleX(0.9802);transform-origin:0 0;'>Analyze</span>
<span class="t" style='left:1446.52px;top:111px;font-size:14.5px;transform:scaleX(0.9815);transform-origin:0 0;'>Data</span>
<span class="t" style='left:13.86px;top:179px;font-size:16px;transform:scaleX(0.9372);transform-origin:0 0;'>E6</span>
<span class="t" style='left:227.20px;top:174px;font-size:22px;color:#1a1a1a;font-style:italic;font-family:"Liberation Serif", serif;-webkit-text-stroke:0.12px #1a1a1a;transform:scaleX(1.1172);transform-origin:0 0;'>fx</span>
<span class="t" style='left:143.20px;top:215px;font-size:16px;color:#333;'>A</span>
<span class="t" style='left:378.50px;top:215px;font-size:16px;color:#333;'>B</span>
<span class="t" style='left:613.50px;top:215px;font-size:16px;color:#333;'>C</span>
<span class="t" style='left:849.00px;top:215px;font-size:16px;color:#333;'>D</span>
<span class="t" style='left:1084.50px;top:215px;font-size:16px;color:#333;'>E</span>
<span class="t" style='left:1319.50px;top:215px;font-size:16px;color:#333;'>F</span>
<span class="t" style='left:1554.00px;top:215px;font-size:16px;color:#333;'>G</span>
<span class="t" style='left:9.60px;top:239px;font-size:16px;color:#333;'>1</span>
<span class="t" style='left:10.10px;top:264px;font-size:16px;color:#333;'>2</span>
<span class="t" style='left:10.10px;top:289px;font-size:16px;color:#333;'>3</span>
<span class="t" style='left:10.10px;top:314px;font-size:16px;color:#333;'>4</span>
<span class="t" style='left:10.10px;top:366px;font-size:16px;color:#333;'>5</span>
<span class="t" style='left:10.10px;top:418px;font-size:16px;color:#333;'>6</span>
<span class="t" style='left:10.10px;top:470px;font-size:16px;color:#333;'>7</span>
<span class="t" style='left:10.10px;top:522px;font-size:16px;color:#333;'>8</span>
<span class="t" style='left:10.10px;top:574px;font-size:16px;color:#333;'>9</span>
<span class="t" style='left:5.75px;top:626px;font-size:16px;color:#333;transform:scaleX(0.9971);transform-origin:0 0;'>10</span>
<span class="t" style='left:5.68px;top:651px;font-size:16px;color:#333;transform:scaleX(1.0725);transform-origin:0 0;'>11</span>
<span class="t" style='left:5.75px;top:675px;font-size:16px;color:#333;transform:scaleX(0.9971);transform-origin:0 0;'>12</span>
<span class="t" style='left:5.75px;top:700px;font-size:16px;color:#333;transform:scaleX(0.9971);transform-origin:0 0;'>13</span>
<span class="t" style='left:33.85px;top:239px;font-size:16px;font-weight:700;color:#fff;transform:scaleX(1.1481);transform-origin:0 0;'>Name</span>
<span class="t" style='left:270.00px;top:239px;font-size:16px;font-weight:700;color:#fff;transform:scaleX(1.0526);transform-origin:0 0;'>Address</span>
<span class="t" style='left:504.41px;top:239px;font-size:16px;font-weight:700;color:#fff;transform:scaleX(1.0939);transform-origin:0 0;'>Phone</span>
<span class="t" style='left:35.00px;top:289px;font-size:16px;font-weight:700;color:#000;transform:scaleX(1.0864);transform-origin:0 0;'>Sales Representative</span>
<span class="t" style='left:33.89px;top:352px;font-size:16px;color:#1f1f1f;transform:scaleX(1.1087);transform-origin:0 0;'>Nancy Freehafer</span>
<span class="t" style='left:504.42px;top:352px;font-size:16px;color:#1f1f1f;transform:scaleX(1.0828);transform-origin:0 0;'>(123) 555-0102</span>
<span class="t" style='left:269.72px;top:342px;font-size:16px;color:#1f1f1f;transform:scaleX(1.0347);transform-origin:0 0;'>123 1</span>
<span class="t" style='left:313.30px;top:338px;font-size:10px;color:#1f1f1f;transform:scaleX(1.0875);transform-origin:0 0;'>st</span>
<span class="t" style='left:327.20px;top:342px;font-size:16px;color:#1f1f1f;transform:scaleX(1.0804);transform-origin:0 0;'>Avenue, Seattle, WA</span>
<span class="t" style='left:270.60px;top:366px;font-size:16px;color:#1f1f1f;transform:scaleX(1.0797);transform-origin:0 0;'>99999</span>
<span class="t" style='left:35.00px;top:404px;font-size:16px;color:#1f1f1f;transform:scaleX(1.0329);transform-origin:0 0;'>Jan Kotas</span>
<span class="t" style='left:504.42px;top:404px;font-size:16px;color:#1f1f1f;transform:scaleX(1.0828);transform-origin:0 0;'>(123) 555-0102</span>
<span class="t" style='left:269.72px;top:394px;font-size:16px;color:#1f1f1f;transform:scaleX(1.0347);transform-origin:0 0;'>123 3</span>
<span class="t" style='left:313.30px;top:390px;font-size:10px;color:#1f1f1f;transform:scaleX(1.2125);transform-origin:0 0;'>rd</span>
<span class="t" style='left:327.20px;top:394px;font-size:16px;color:#1f1f1f;transform:scaleX(1.0804);transform-origin:0 0;'>Avenue, Seattle, WA</span>
<span class="t" style='left:270.60px;top:418px;font-size:16px;color:#1f1f1f;transform:scaleX(1.0797);transform-origin:0 0;'>99999</span>
<span class="t" style='left:33.92px;top:456px;font-size:16px;color:#1f1f1f;transform:scaleX(1.0780);transform-origin:0 0;'>Maiya Sergienko</span>
<span class="t" style='left:504.42px;top:456px;font-size:16px;color:#1f1f1f;transform:scaleX(1.0828);transform-origin:0 0;'>(123) 555-0102</span>
<span class="t" style='left:269.72px;top:446px;font-size:16px;color:#1f1f1f;transform:scaleX(1.0347);transform-origin:0 0;'>123 4</span>
<span class="t" style='left:313.30px;top:442px;font-size:10px;color:#1f1f1f;transform:scaleX(1.2985);transform-origin:0 0;'>th</span>
<span class="t" style='left:327.20px;top:446px;font-size:16px;color:#1f1f1f;transform:scaleX(1.0804);transform-origin:0 0;'>Avenue, Seattle, WA</span>
<span class="t" style='left:270.60px;top:470px;font-size:16px;color:#1f1f1f;transform:scaleX(1.0797);transform-origin:0 0;'>99999</span>
<span class="t" style='left:33.88px;top:508px;font-size:16px;color:#1f1f1f;transform:scaleX(1.1190);transform-origin:0 0;'>Michael Neipper</span>
<span class="t" style='left:504.42px;top:508px;font-size:16px;color:#1f1f1f;transform:scaleX(1.0828);transform-origin:0 0;'>(123) 555-0102</span>
<span class="t" style='left:269.72px;top:498px;font-size:16px;color:#1f1f1f;transform:scaleX(1.0347);transform-origin:0 0;'>123 6</span>
<span class="t" style='left:313.30px;top:494px;font-size:10px;color:#1f1f1f;transform:scaleX(1.2985);transform-origin:0 0;'>th</span>
<span class="t" style='left:331.00px;top:498px;font-size:16px;color:#1f1f1f;transform:scaleX(1.0804);transform-origin:0 0;'>Avenue, Seattle, WA</span>
<span class="t" style='left:270.60px;top:522px;font-size:16px;color:#1f1f1f;transform:scaleX(1.0797);transform-origin:0 0;'>99999</span>
<span class="t" style='left:33.94px;top:559px;font-size:16px;color:#1f1f1f;transform:scaleX(1.0566);transform-origin:0 0;'>Robert Zare</span>
<span class="t" style='left:504.42px;top:559px;font-size:16px;color:#1f1f1f;transform:scaleX(1.0828);transform-origin:0 0;'>(123) 555-0102</span>
<span class="t" style='left:269.72px;top:549px;font-size:16px;color:#1f1f1f;transform:scaleX(1.0347);transform-origin:0 0;'>123 7</span>
<span class="t" style='left:313.30px;top:545px;font-size:10px;color:#1f1f1f;transform:scaleX(1.2985);transform-origin:0 0;'>th</span>
<span class="t" style='left:327.20px;top:549px;font-size:16px;color:#1f1f1f;transform:scaleX(1.0804);transform-origin:0 0;'>Avenue, Seattle, WA</span>
<span class="t" style='left:270.60px;top:573px;font-size:16px;color:#1f1f1f;transform:scaleX(1.0797);transform-origin:0 0;'>99999</span>
<span class="t" style='left:35.00px;top:612px;font-size:16px;color:#1f1f1f;transform:scaleX(1.1076);transform-origin:0 0;'>Anne Hullung-Larsen</span>
<span class="t" style='left:504.42px;top:612px;font-size:16px;color:#1f1f1f;transform:scaleX(1.0828);transform-origin:0 0;'>(123) 555-0102</span>
<span class="t" style='left:269.72px;top:601px;font-size:16px;color:#1f1f1f;transform:scaleX(1.0347);transform-origin:0 0;'>123 9</span>
<span class="t" style='left:313.30px;top:597px;font-size:10px;color:#1f1f1f;transform:scaleX(1.2985);transform-origin:0 0;'>th</span>
<span class="t" style='left:327.20px;top:601px;font-size:16px;color:#1f1f1f;transform:scaleX(1.0804);transform-origin:0 0;'>Avenue, Seattle, WA</span>
<span class="t" style='left:270.60px;top:625px;font-size:16px;color:#1f1f1f;transform:scaleX(1.0797);transform-origin:0 0;'>99999</span>
</body></html>
